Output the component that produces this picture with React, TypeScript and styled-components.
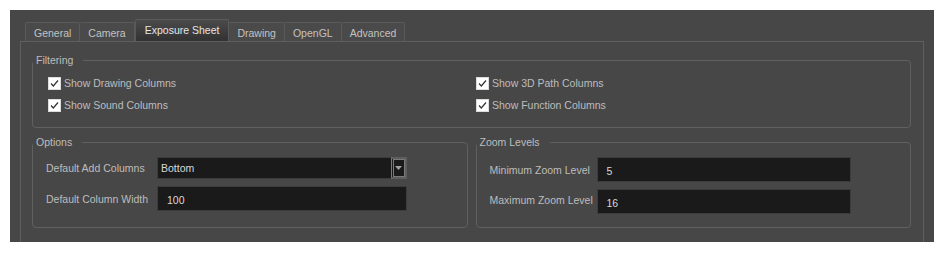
import React from 'react';
import styled, { createGlobalStyle } from 'styled-components';

const GlobalStyles = createGlobalStyle`
  html, body {
    margin: 0;
    padding: 0;
    background: #ffffff;
  }
  body {
    font-family: "Liberation Sans", Arial, sans-serif;
    font-size: 10.5px;
  }
`;

const tabs = ['General', 'Camera', 'Exposure Sheet', 'Drawing', 'OpenGL', 'Advanced'];

const Check = () => (
  <CheckBox>
    <svg width="11" height="11" viewBox="0 0 11 11">
      <path d="M2 5.5 L4.3 8 L9 2.5" fill="none" stroke="#333" strokeWidth="1.2" />
    </svg>
  </CheckBox>
);

const App = () => {
  return (
    <>
      <GlobalStyles />
      <Frame>
        <TabBar>
          {tabs.map((t) => (
            <Tab key={t} $active={t === 'Exposure Sheet'}>
              {t}
            </Tab>
          ))}
        </TabBar>
        <Pane>
          <Group>
            <Legend>Filtering</Legend>
            <CheckGrid>
              <CheckItem>
                <Check />
                Show Drawing Columns
              </CheckItem>
              <CheckItem>
                <Check />
                Show 3D Path Columns
              </CheckItem>
              <CheckItem>
                <Check />
                Show Sound Columns
              </CheckItem>
              <CheckItem>
                <Check />
                Show Function Columns
              </CheckItem>
            </CheckGrid>
          </Group>
          <Columns>
            <Group>
              <Legend>Options</Legend>
              <Form $labelW={111} $fieldW={250}>
                <Label>Default Add Columns</Label>
                <Combo>
                  <span>Bottom</span>
                  <DropButton>
                    <svg width="7" height="4" viewBox="0 0 7 4">
                      <path d="M0 0 H7 L3.5 4 Z" fill="#a0a0a0" />
                    </svg>
                  </DropButton>
                </Combo>
                <Label>Default Column Width</Label>
                <Field>100</Field>
              </Form>
            </Group>
            <Group>
              <Legend>Zoom Levels</Legend>
              <Form $labelW={107} $fieldW={254}>
                <Label>Minimum Zoom Level</Label>
                <Field>5</Field>
                <Label $lift>Maximum Zoom Level</Label>
                <Field>16</Field>
              </Form>
            </Group>
          </Columns>
        </Pane>
      </Frame>
    </>
  );
};

export default App;

const Frame = styled.div`
  margin: 10px;
  width: 924px;
  height: 232px;
  box-sizing: border-box;
  padding: 9px 10px 0 10px;
  background: #474747;
  overflow: hidden;
  color: #bdbdbd;
`;

const TabBar = styled.div`
  display: flex;
  align-items: flex-end;
  height: 22px;
  padding-left: 5px;
`;

const Tab = styled.div<{ $active?: boolean }>`
  box-sizing: border-box;
  height: ${(p) => (p.$active ? '22px' : '19px')};
  padding: ${(p) => (p.$active ? '0 9px' : '0 8px')};
  line-height: ${(p) => (p.$active ? '20px' : '21px')};
  border: 1px solid #5a5a5a;
  border-bottom: none;
  border-left-width: ${(p) => (p.$active ? '1px' : '0')};
  border-radius: 2px 2px 0 0;
  background: ${(p) =>
    p.$active ? 'linear-gradient(#4a4a4a, #323232)' : '#4a4a4a'};
  color: ${(p) => (p.$active ? '#e6e6e6' : '#c2c2c2')};
  white-space: nowrap;

  &:first-child {
    border-left-width: 1px;
  }
`;

const Pane = styled.div`
  border: 1px solid #5e5e5e;
  border-bottom: none;
  height: 220px;
  padding: 11px 12px 0 11px;
`;

const Group = styled.fieldset`
  margin: 0;
  padding: 0;
  min-width: 0;
  border: 1px solid #606060;
  border-radius: 4px;
`;

const Legend = styled.legend`
  padding: 0 10px 0 3px;
  line-height: 14px;
  color: #bdbdbd;
`;

const CheckGrid = styled.div`
  display: grid;
  grid-template-columns: 1fr 1fr;
  grid-auto-rows: 22px;
  align-items: center;
  padding: 5px 6px 11px 15px;
`;

const CheckItem = styled.div`
  display: flex;
  align-items: center;
  gap: 3px;
`;

const CheckBox = styled.span`
  display: inline-flex;
  align-items: center;
  justify-content: center;
  width: 13px;
  height: 13px;
  background: #ffffff;
  box-sizing: border-box;
  border: 1px solid #dcdcdc;
`;

const Columns = styled.div`
  display: grid;
  grid-template-columns: 1fr 1fr;
  column-gap: 8px;
  margin-top: 7px;
`;

const Form = styled.div<{ $labelW: number; $fieldW: number }>`
  display: grid;
  grid-template-columns: ${(p) => p.$labelW}px ${(p) => p.$fieldW}px;
  row-gap: 7px;
  align-items: center;
  padding: 8px 0 13px 13px;
`;

const Label = styled.span<{ $lift?: boolean }>`
  color: #bdbdbd;
  white-space: nowrap;
  margin-top: ${(p) => (p.$lift ? '-4px' : '0')};
`;

const Combo = styled.div`
  display: flex;
  align-items: center;
  justify-content: space-between;
  height: 22px;
  box-sizing: border-box;
  border: 1px solid #3c3c3c;
  background: #1a1a1a;
  padding-left: 3px;
  color: #d8d8d8;
`;

const DropButton = styled.span`
  display: flex;
  align-items: center;
  justify-content: center;
  width: 16px;
  height: 22px;
  box-sizing: border-box;
  margin-right: -1px;
  border: 2px solid #5e5e5e;
  border-left: 1px solid #7a7a7a;
  outline: 1px solid #7a7a7a;
  outline-offset: -3px;
  background: #1a1a1a;
`;

const Field = styled.div`
  height: 25px;
  box-sizing: border-box;
  border: 1px solid #3c3c3c;
  background: #1a1a1a;
  padding: 3px 0 0 9px;
  line-height: 20px;
  color: #d8d8d8;
`;
